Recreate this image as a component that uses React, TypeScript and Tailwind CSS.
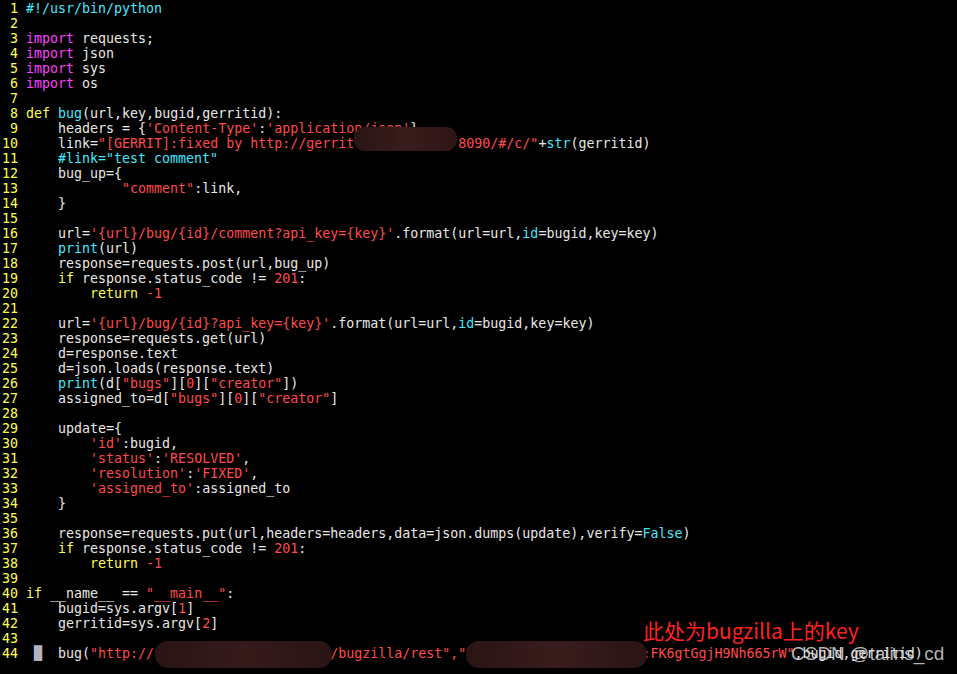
const W = "text-[#e8e8e8]"
const Y = "text-[#ffff4d]"
const C = "text-[#40e8ff]"
const M = "text-[#ff40ff]"
const R = "text-[#ff4a4a]"

type Tok = [string, string]

const lines: Tok[][] = [
  [["#!/usr/bin/python", C]],
  [],
  [["import", M], [" requests;", W]],
  [["import", M], [" json", W]],
  [["import", M], [" sys", W]],
  [["import", M], [" os", W]],
  [],
  [["def", Y], [" ", W], ["bug", C], ["(url,key,bugid,gerritid):", W]],
  [["    headers = {", W], ["'Content-Type'", R], [":", W], ["'application/json'", R], ["}", W]],
  [["    link=", W], ['"[GERRIT]:fixed by http://gerrit             8090/#/c/"', R], ["+", W], ["str", C], ["(gerritid)", W]],
  [['    #link="test comment"', C]],
  [["    bug_up={", W]],
  [['            "comment"', R], [":link,", W]],
  [["    }", W]],
  [],
  [["    url=", W], ["'{url}/bug/{id}/comment?api_key={key}'", R], [".format(url=url,", W], ["id", C], ["=bugid,key=key)", W]],
  [["    ", W], ["print", C], ["(url)", W]],
  [["    response=requests.post(url,bug_up)", W]],
  [["    ", W], ["if", Y], [" response.status_code != ", W], ["201", R], [":", W]],
  [["        ", W], ["return", Y], [" ", W], ["-1", R]],
  [],
  [["    url=", W], ["'{url}/bug/{id}?api_key={key}'", R], [".format(url=url,", W], ["id", C], ["=bugid,key=key)", W]],
  [["    response=requests.get(url)", W]],
  [["    d=response.text", W]],
  [["    d=json.loads(response.text)", W]],
  [["    ", W], ["print", C], ["(d[", W], ['"bugs"', R], ["][", W], ["0", R], ["][", W], ['"creator"', R], ["])", W]],
  [["    assigned_to=d[", W], ['"bugs"', R], ["][", W], ["0", R], ["][", W], ['"creator"', R], ["]", W]],
  [],
  [["    update={", W]],
  [["        ", W], ["'id'", R], [":bugid,", W]],
  [["        ", W], ["'status'", R], [":", W], ["'RESOLVED'", R], [",", W]],
  [["        ", W], ["'resolution'", R], [":", W], ["'FIXED'", R], [",", W]],
  [["        ", W], ["'assigned_to'", R], [":assigned_to", W]],
  [["    }", W]],
  [],
  [["    response=requests.put(url,headers=headers,data=json.dumps(update),verify=", W], ["False", C], [")", W]],
  [["    ", W], ["if", Y], [" response.status_code != ", W], ["201", R], [":", W]],
  [["        ", W], ["return", Y], [" ", W], ["-1", R]],
  [],
  [["if", Y], [" __name__ == ", W], ['"__main__"', R], [":", W]],
  [["    bugid=sys.argv[", W], ["1", R], ["]", W]],
  [["    gerritid=sys.argv[", W], ["2", R], ["]", W]],
  [],
  [
    [" ", W], ["\u2588", "text-[#b4b4c4]"], ["  bug(", W],
    ['"http://                      /bugzilla/rest","                      :FK6gtGgjH9Nh665rW"', R],
    [",bugid,gerritid)", W],
  ],
]

const App = () => {
  return (
    <div className="relative w-[957px] h-[674px] overflow-hidden bg-black">
      <div
        className="flex flex-col pt-[1px] text-[13.3px] leading-[15px] whitespace-pre"
        style={{ fontFamily: '"DejaVu Sans Mono", monospace' }}
      >
        {lines.map((toks, i) => (
          <div key={i} className="flex h-[15px]">
            <span className={`w-[18px] text-right ${Y}`}>{i + 1}</span>
            <span className="ml-[8px]">
              {toks.map(([t, c], j) => (
                <span key={j} className={c}>{t}</span>
              ))}
            </span>
          </div>
        ))}
      </div>

      {/* blurred regions */}
      <div className="absolute left-[354px] top-[127px] w-[103px] h-[24px] rounded-[11px] bg-gradient-to-r from-[#2a1414] via-[#3a1c1c] to-[#2e1515] blur-[0.5px]" />
      <div className="absolute left-[155px] top-[641px] w-[177px] h-[27px] rounded-[13px] bg-gradient-to-r from-[#2a1414] via-[#361a1a] to-[#2a1414] blur-[0.5px]" />
      <div className="absolute left-[466px] top-[641px] w-[181px] h-[27px] rounded-[13px] bg-gradient-to-r from-[#2a1414] via-[#3a1c1c] to-[#2a1414] blur-[0.5px]" />

      {/* annotation */}
      <div
        className="absolute left-[643px] top-[617px] text-[21px] leading-[26px] text-[#ff2020]"
        style={{ fontFamily: '"Noto Sans CJK SC", sans-serif' }}
      >
        此处为bugzilla上的key
      </div>

      {/* watermark */}
      <div
        className="absolute left-[791px] top-[642px] text-[19px] leading-[24px] text-[#d8d8d8]/85"
        style={{ fontFamily: '"Liberation Sans", Arial, sans-serif' }}
      >
        CSDN @talins_cd
      </div>
    </div>
  )
}

export default App
